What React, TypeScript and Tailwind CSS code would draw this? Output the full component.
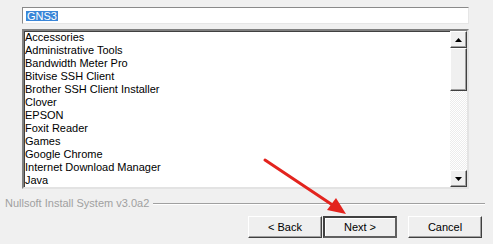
import React from 'react';

const folders = [
  'Accessories',
  'Administrative Tools',
  'Bandwidth Meter Pro',
  'Bitvise SSH Client',
  'Brother SSH Client Installer',
  'Clover',
  'EPSON',
  'Foxit Reader',
  'Games',
  'Google Chrome',
  'Internet Download Manager',
  'Java',
];

function ScrollArrow({ up }: { up?: boolean }) {
  return (
    <div className="h-[17px] w-[17px] bg-[#f0f0f0] border border-t-white border-l-white border-b-[#404040] border-r-[#404040] shadow-[inset_-1px_-1px_0_#a0a0a0] flex items-center justify-center">
      <svg width="7" height="4" viewBox="0 0 7 4">
        {up ? <path d="M3.5 0 L7 4 L0 4 Z" fill="#000" /> : <path d="M0 0 L7 0 L3.5 4 Z" fill="#000" />}
      </svg>
    </div>
  );
}

function WinButton({ label, isDefault }: { label: string; isDefault?: boolean }) {
  return (
    <button
      className={`h-[22px] w-[74px] bg-[#efefef] text-[11px] text-black ${
        isDefault
          ? 'border-2 border-t-[#404040] border-l-[#404040] border-b-[#606060] border-r-[#606060] shadow-[inset_1px_1px_0_#fff]'
          : 'border border-t-white border-l-white border-b-[#404040] border-r-[#404040] shadow-[inset_-1px_-1px_0_#a0a0a0]'
      }`}
    >
      {label}
    </button>
  );
}

export default function App() {
  return (
    <div className="relative w-[493px] h-[244px] overflow-hidden bg-[#f0f0f0] font-['Liberation_Sans',Arial,sans-serif] text-[11px] text-black">
      <div className="pl-[22px] pt-[7px]">
        {/* start menu folder field */}
        <div className="h-[17px] w-[447px] bg-white border border-t-[#8a8a8a] border-l-[#8a8a8a] border-b-[#e6e6e6] border-r-[#e6e6e6] flex items-center pl-[3px]">
          <span className="bg-[#3a86d8] text-white leading-[10px] h-[10px] px-[1px] flex items-center">GNS3</span>
        </div>

        {/* folder list */}
        <div className="mt-[5px] h-[160px] w-[447px] bg-white border-2 border-t-[#808080] border-l-[#808080] border-b-[#e3e3e3] border-r-[#e3e3e3] shadow-[inset_1px_1px_0_#404040] flex overflow-hidden">
          <div className="flex-1 pl-[1px] overflow-hidden">
            {folders.map((f) => (
              <div key={f} className="h-[13px] leading-[13px] whitespace-nowrap">
                {f}
              </div>
            ))}
          </div>
          <div className="w-[17px] flex flex-col bg-[repeating-conic-gradient(#ffffff_0_25%,#ececec_0_50%)] bg-[length:2px_2px]">
            <ScrollArrow up />
            <div className="h-[43px] bg-[#f0f0f0] border border-t-white border-l-white border-b-[#404040] border-r-[#404040] shadow-[inset_-1px_-1px_0_#a0a0a0]" />
            <div className="flex-1" />
            <ScrollArrow />
          </div>
        </div>
      </div>

      {/* branding separator */}
      <div className="mt-[8px] flex items-center pl-[5px] pr-[8px] h-[13px]">
        <span className="text-[#a0a0a0] leading-[13px] whitespace-nowrap">Nullsoft Install System v3.0a2</span>
        <div className="ml-[4px] flex-1 border-t border-t-[#a0a0a0] border-b border-b-white" />
      </div>

      {/* buttons */}
      <div className="mt-[6px] flex justify-end pr-[11px]">
        <WinButton label="< Back" />
        <div className="ml-[1px]">
          <WinButton label="Next >" isDefault />
        </div>
        <div className="ml-[11px]">
          <WinButton label="Cancel" />
        </div>
      </div>

      {/* red annotation arrow */}
      <svg className="absolute left-0 top-0 pointer-events-none" width="493" height="244">
        <line x1="265" y1="160" x2="334" y2="206" stroke="#e3241e" strokeWidth="3" strokeLinecap="round" />
        <path d="M346 214 L327 210 L336 198 Z" fill="#e3241e" />
      </svg>
    </div>
  );
}
